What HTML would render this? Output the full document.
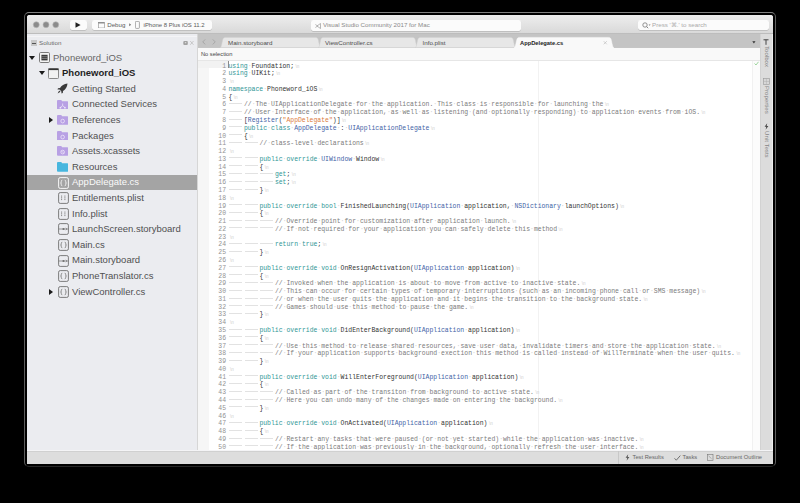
<!DOCTYPE html>
<html><head><meta charset="utf-8">
<style>
*{margin:0;padding:0;box-sizing:border-box}
html,body{width:800px;height:503px;overflow:hidden;background:#000;font-family:"Liberation Sans",sans-serif}
.abs{position:absolute}
#ring{position:absolute;left:24px;top:12px;width:752px;height:455px;border:1px solid #5e5e5e;border-top-color:#808080;border-bottom-color:#262626;border-radius:5px}
#win{position:absolute;left:27px;top:15px;width:746px;height:449px;background:#ececf0;border-radius:2.5px;overflow:hidden}
#toolbar{position:absolute;left:27px;top:15px;width:746px;height:19px;background:linear-gradient(#eeeeee,#d9d9d9);border-bottom:1px solid #bdbdbd;border-radius:2.5px 2.5px 0 0}
.tl{position:absolute;top:21.75px;width:6px;height:6px;border-radius:50%;background:#8d8d8d;box-shadow:0 0 0 0.6px #b5b5b5}
.btn{position:absolute;top:20px;height:10px;background:#fbfbfb;border-radius:2px;box-shadow:0 0.5px 0.5px rgba(0,0,0,0.25)}
.tbt{position:absolute;font-size:6.2px;color:#5a5a5a;white-space:nowrap;line-height:10px;top:20px}
#side{position:absolute;left:27px;top:34px;width:170px;height:416px;background:#ebecf0}
#sideborder{position:absolute;left:197px;top:34px;width:1px;height:416px;background:#d6d6d6}
.row{position:absolute;font-size:9.5px;line-height:14px;color:#505050;white-space:nowrap}
.row.r0{color:#666}
.row.r1{font-weight:bold;color:#1e1e1e}
.row.sel{color:#fafafa}
.selbg{position:absolute;left:27px;width:170px;height:15px;background:#a4a4a4}
#tabbar{position:absolute;left:198px;top:34px;width:562px;height:14px;background:#c4c4c4}
.tabt{position:absolute;top:37.5px;font-size:6.2px;color:#4e4e4e;line-height:10px;white-space:nowrap}
#crumb{position:absolute;left:198px;top:48px;width:562px;height:13px;background:#f9f9f9;border-bottom:1px solid #e6e6e6}
#editor{position:absolute;left:198px;top:61px;width:562px;height:389px;background:#fff;overflow:hidden}
#gutter{position:absolute;left:198px;top:61px;width:10.6px;height:389px;background:#f6f6f6}
#curl{position:absolute;left:198px;top:60.7px;width:30px;height:7.4px;background:#f2f2f2}
#rsb{position:absolute;left:759.5px;top:34px;width:13.5px;height:416px;background:#dcdcdc;border-left:0.7px solid #d2d2d2;border-right:0.7px solid #eeeeee}
#status{position:absolute;left:27px;top:450.5px;width:746px;height:13.5px;background:#dddddd;border-top:0.8px solid #d0d0d0;box-shadow:0 -1px 0 #f4f4f6}
.ln{position:absolute;left:0;width:800px;height:7.78px;font-family:"Liberation Mono",monospace;font-size:6.456px;line-height:7.78px;white-space:pre}
.num{position:absolute;right:574px;color:#939393;top:0}
.cd{position:absolute;left:228.4px;top:0}
.tx{position:absolute;top:0;color:#333}
.k{color:#2f9696}
.t{color:#3f63a6}
.s{color:#db7a3b}
.c{color:#7b7b7b}
.sp{font-weight:normal;color:#cfcfcf}
.nl{color:#d0d0d0;padding-left:1.5px;font-size:4.6px;font-family:"Liberation Sans",sans-serif;line-height:0}
.tb{position:absolute;top:1.6px;width:13px;height:0.55px;background:#e2e2e2}
#marg{position:absolute;left:752.3px;top:61px;width:7.5px;height:389px;background:#fcfcfc;border-left:0.6px solid #f1f1f1}
#rul{position:absolute;left:538px;top:61px;width:0.7px;height:389px;background:#f2f2f2}
.vt{position:absolute;font-size:6.1px;line-height:7px;color:#858585;white-space:nowrap;transform-origin:0 0;transform:rotate(90deg)}
.st{position:absolute;top:451px;font-size:5.75px;color:#666;line-height:13px;white-space:nowrap}
</style></head><body>
<div id="ring"></div>
<div id="win"></div>
<div id="toolbar"></div>
<svg style="position:absolute;left:30px;top:19px" width="32" height="12"><g fill="#8b8b8b" stroke="#b9b9b9" stroke-width="0.6"><circle cx="6.25" cy="5.75" r="3"/><circle cx="16" cy="5.75" r="3"/><circle cx="25.75" cy="5.75" r="3"/></g></svg>
<div class="btn" style="left:70px;width:17px"><svg style="position:absolute;left:5px;top:2.2px" width="6" height="6"><path d="M0.5 0.3L5.6 3L0.5 5.7Z" fill="#222"/></svg></div>
<div class="btn" style="left:92px;width:120px">
 <svg style="position:absolute;left:6px;top:1.8px" width="7" height="6.5"><rect x="0.4" y="0.4" width="6" height="5.6" fill="none" stroke="#8a8a8a" stroke-width="0.6"/><rect x="0.4" y="0.4" width="6" height="1" fill="#777"/></svg>
 <span class="tbt" style="left:15.2px;top:0">Debug</span>
 <svg style="position:absolute;left:37.3px;top:3.4px" width="3" height="4"><path d="M0.2 0.3L2.2 1.8L0.2 3.3Z" fill="#777"/></svg>
 <svg style="position:absolute;left:43px;top:1.2px" width="5" height="8"><rect x="0.4" y="0.4" width="4" height="7" rx="0.8" fill="none" stroke="#888" stroke-width="0.7"/></svg>
 <span class="tbt" style="left:51.6px;top:0;font-size:5.95px">iPhone 8 Plus iOS 11.2</span>
</div>
<div class="btn" style="left:311px;width:210px;height:11px">
 <svg style="position:absolute;left:4px;top:2.5px" width="6" height="6"><path d="M0.4 1.5L2.5 3L0.4 4.5M5.5 0.5V5.5L2 3Z" fill="none" stroke="#999" stroke-width="0.7"/></svg>
 <span class="tbt" style="left:11.9px;top:-0.8px;line-height:11px;color:#8a8a8a">Visual Studio Community 2017 for Mac</span>
</div>
<div class="btn" style="left:638px;width:131px">
 <svg style="position:absolute;left:4px;top:2px" width="9" height="7"><circle cx="3" cy="3" r="2.2" fill="none" stroke="#777" stroke-width="0.8"/><path d="M4.6 4.6L6.2 6.2" stroke="#777" stroke-width="0.9"/><path d="M6.6 2.6H8.6L7.6 3.8Z" fill="#777"/></svg>
 <span class="tbt" style="left:14px;top:0;color:#aaa">Press '⌘.' to search</span>
</div>

<div id="side"></div>
<div id="sideborder"></div><div style="position:absolute;left:27px;top:35.5px;width:170px;height:0.7px;background:#f4f4f6"></div>
<svg style="position:absolute;left:31px;top:40px" width="6" height="6"><rect x="0" y="0" width="6" height="6" fill="#c9c9c9"/><rect x="1" y="3" width="4" height="1" fill="#555"/></svg>
<div style="position:absolute;left:39px;top:38px;font-size:6.2px;color:#6a6a6a;line-height:10px">Solution</div>
<svg style="position:absolute;left:182px;top:40px" width="13" height="6"><rect x="1.3" y="1" width="4.5" height="4" rx="1" fill="#a2a2a2"/><path d="M2.6 2.2H4.5L3.55 3.4Z" fill="#eee"/><path d="M8.2 1L11.5 4.8M11.5 1L8.2 4.8" stroke="#b0b0b0" stroke-width="0.6"/></svg>
<svg style="position:absolute;left:29px;top:55.80px" width="6" height="4"><path d="M0 0H6L3 4Z" fill="#1a1a1a"/></svg><svg style="position:absolute;left:39px;top:52.10px" width="11" height="11" viewBox="0 0 11 11"><rect x="0.5" y="0.5" width="10" height="10" rx="1.2" fill="#f4f4f4" stroke="#7a7a7a"/><rect x="2.4" y="2.8" width="6.2" height="5.6" fill="#3a3a3a"/><rect x="2.4" y="4.6" width="6.2" height="0.5" fill="#bbb"/><rect x="2.4" y="6.4" width="6.2" height="0.5" fill="#bbb"/></svg><div class="row r0" style="left:53px;top:50.60px">Phoneword_iOS</div>
<svg style="position:absolute;left:39px;top:71.40px" width="6" height="4"><path d="M0 0H6L3 4Z" fill="#1a1a1a"/></svg><svg style="position:absolute;left:48px;top:67.70px" width="11" height="11" viewBox="0 0 11 11"><rect x="0.5" y="0.5" width="10" height="10" rx="0.8" fill="#f2f2f2" stroke="#8a8a8a"/><rect x="0.5" y="0.5" width="10" height="1.6" fill="#333"/></svg><div class="row r1" style="left:62px;top:66.20px">Phoneword_iOS</div>
<svg style="position:absolute;left:57px;top:83.30px" width="11" height="11" viewBox="0 0 11 11"><path d="M10.5 0.5 C7 0.8 4.5 2.5 3 5 L1 5.2 L0.5 6.5 L2.6 6.6 L4.4 8.4 L4.5 10.5 L5.8 10 L6 8 C8.5 6.5 10.2 4 10.5 0.5 Z" fill="#3a3a3a"/><path d="M2.2 7.5 L0.6 10.4 L3.5 8.8 Z" fill="#3a3a3a"/></svg><div class="row " style="left:72px;top:81.80px">Getting Started</div>
<svg style="position:absolute;left:56.9px;top:99.50px" width="11.3" height="9.8" viewBox="0 0 12 10" preserveAspectRatio="none"><path d="M0 1 Q0 0 1 0 L4.5 0 L5.5 1.3 L11 1.3 Q12 1.3 12 2.3 L12 9 Q12 10 11 10 L1 10 Q0 10 0 9 Z" fill="#b8a0e4"/><path d="M6 3.6V5.8M6 5.8L3.8 7.6M6 5.8L8.2 7.6" stroke="#efe9f8" stroke-width="0.8"/><circle cx="3.6" cy="7.8" r="0.9" fill="#efe9f8"/><circle cx="8.4" cy="7.8" r="0.9" fill="#efe9f8"/></svg><div class="row " style="left:72px;top:97.40px">Connected Services</div>
<svg style="position:absolute;left:49px;top:117.00px" width="4" height="6"><path d="M0 0V6L4 3Z" fill="#1a1a1a"/></svg><svg style="position:absolute;left:56.9px;top:115.10px" width="11.3" height="9.8" viewBox="0 0 12 10" preserveAspectRatio="none"><path d="M0 1 Q0 0 1 0 L4.5 0 L5.5 1.3 L11 1.3 Q12 1.3 12 2.3 L12 9 Q12 10 11 10 L1 10 Q0 10 0 9 Z" fill="#b8a0e4"/><circle cx="6" cy="6.2" r="1.9" fill="none" stroke="#efe9f8" stroke-width="0.8"/></svg><div class="row " style="left:72px;top:113.00px">References</div>
<svg style="position:absolute;left:56.9px;top:130.70px" width="11.3" height="9.8" viewBox="0 0 12 10" preserveAspectRatio="none"><path d="M0 1 Q0 0 1 0 L4.5 0 L5.5 1.3 L11 1.3 Q12 1.3 12 2.3 L12 9 Q12 10 11 10 L1 10 Q0 10 0 9 Z" fill="#b8a0e4"/><circle cx="6" cy="6.2" r="1.9" fill="none" stroke="#efe9f8" stroke-width="0.8"/></svg><div class="row " style="left:72px;top:128.60px">Packages</div>
<svg style="position:absolute;left:56.9px;top:146.30px" width="11.3" height="9.8" viewBox="0 0 12 10" preserveAspectRatio="none"><path d="M0 1 Q0 0 1 0 L4.5 0 L5.5 1.3 L11 1.3 Q12 1.3 12 2.3 L12 9 Q12 10 11 10 L1 10 Q0 10 0 9 Z" fill="#b8a0e4"/><circle cx="6" cy="6.2" r="1.9" fill="none" stroke="#efe9f8" stroke-width="0.8"/><path d="M4.6 4.8L7.4 7.6" stroke="#efe9f8" stroke-width="0.7"/></svg><div class="row " style="left:72px;top:144.20px">Assets.xcassets</div>
<svg style="position:absolute;left:56.9px;top:161.90px" width="11.3" height="9.8" viewBox="0 0 12 10" preserveAspectRatio="none"><path d="M0 1 Q0 0 1 0 L4.5 0 L5.5 1.3 L11 1.3 Q12 1.3 12 2.3 L12 9 Q12 10 11 10 L1 10 Q0 10 0 9 Z" fill="#47b6de"/></svg><div class="row " style="left:72px;top:159.80px">Resources</div>
<div class="selbg" style="top:174.90px"></div><svg style="position:absolute;left:57.5px;top:176.60px" width="11" height="12" viewBox="0 0 11 12"><rect x="0.6" y="0.6" width="9.8" height="10.8" rx="1.6" fill="none" stroke="#fff" stroke-width="0.9"/><path d="M4.3 3.2 Q3.3 3.2 3.3 4.2 V5.3 Q3.3 6 2.6 6 Q3.3 6 3.3 6.7 V7.8 Q3.3 8.8 4.3 8.8 M6.7 3.2 Q7.7 3.2 7.7 4.2 V5.3 Q7.7 6 8.4 6 Q7.7 6 7.7 6.7 V7.8 Q7.7 8.8 6.7 8.8" fill="none" stroke="#fff" stroke-width="0.75"/></svg><div class="row sel" style="left:72px;top:175.40px">AppDelegate.cs</div>
<svg style="position:absolute;left:57.5px;top:192.20px" width="11" height="12" viewBox="0 0 11 12"><rect x="0.6" y="0.6" width="9.8" height="10.8" rx="1.6" fill="none" stroke="#707070" stroke-width="0.9"/><path d="M3.6 3.5V8.5M6.9 3.5V8.5" stroke="#707070" stroke-width="0.8" stroke-dasharray="1.2 0.5"/></svg><div class="row " style="left:72px;top:191.00px">Entitlements.plist</div>
<svg style="position:absolute;left:57.5px;top:207.80px" width="11" height="12" viewBox="0 0 11 12"><rect x="0.6" y="0.6" width="9.8" height="10.8" rx="1.6" fill="none" stroke="#707070" stroke-width="0.9"/><path d="M3.6 3.5V8.5M6.9 3.5V8.5" stroke="#707070" stroke-width="0.8" stroke-dasharray="1.2 0.5"/></svg><div class="row " style="left:72px;top:206.60px">Info.plist</div>
<svg style="position:absolute;left:57.5px;top:223.40px" width="11" height="12" viewBox="0 0 11 12"><rect x="0.6" y="0.6" width="9.8" height="10.8" rx="1.6" fill="none" stroke="#707070" stroke-width="0.9"/><path d="M0.6 6 H10.4" stroke="#707070" stroke-width="0.7"/><circle cx="5.5" cy="6" r="1.1" fill="#707070"/><path d="M7.8 4.8L9 6L7.8 7.2" fill="none" stroke="#707070" stroke-width="0.6"/></svg><div class="row " style="left:72px;top:222.20px">LaunchScreen.storyboard</div>
<svg style="position:absolute;left:57.5px;top:239.00px" width="11" height="12" viewBox="0 0 11 12"><rect x="0.6" y="0.6" width="9.8" height="10.8" rx="1.6" fill="none" stroke="#707070" stroke-width="0.9"/><path d="M4.3 3.2 Q3.3 3.2 3.3 4.2 V5.3 Q3.3 6 2.6 6 Q3.3 6 3.3 6.7 V7.8 Q3.3 8.8 4.3 8.8 M6.7 3.2 Q7.7 3.2 7.7 4.2 V5.3 Q7.7 6 8.4 6 Q7.7 6 7.7 6.7 V7.8 Q7.7 8.8 6.7 8.8" fill="none" stroke="#707070" stroke-width="0.75"/></svg><div class="row " style="left:72px;top:237.80px">Main.cs</div>
<svg style="position:absolute;left:57.5px;top:254.60px" width="11" height="12" viewBox="0 0 11 12"><rect x="0.6" y="0.6" width="9.8" height="10.8" rx="1.6" fill="none" stroke="#707070" stroke-width="0.9"/><path d="M0.6 6 H10.4" stroke="#707070" stroke-width="0.7"/><circle cx="5.5" cy="6" r="1.1" fill="#707070"/><path d="M7.8 4.8L9 6L7.8 7.2" fill="none" stroke="#707070" stroke-width="0.6"/></svg><div class="row " style="left:72px;top:253.40px">Main.storyboard</div>
<svg style="position:absolute;left:57.5px;top:270.20px" width="11" height="12" viewBox="0 0 11 12"><rect x="0.6" y="0.6" width="9.8" height="10.8" rx="1.6" fill="none" stroke="#707070" stroke-width="0.9"/><path d="M4.3 3.2 Q3.3 3.2 3.3 4.2 V5.3 Q3.3 6 2.6 6 Q3.3 6 3.3 6.7 V7.8 Q3.3 8.8 4.3 8.8 M6.7 3.2 Q7.7 3.2 7.7 4.2 V5.3 Q7.7 6 8.4 6 Q7.7 6 7.7 6.7 V7.8 Q7.7 8.8 6.7 8.8" fill="none" stroke="#707070" stroke-width="0.75"/></svg><div class="row " style="left:72px;top:269.00px">PhoneTranslator.cs</div>
<svg style="position:absolute;left:49px;top:288.60px" width="4" height="6"><path d="M0 0V6L4 3Z" fill="#1a1a1a"/></svg><svg style="position:absolute;left:57.5px;top:285.80px" width="11" height="12" viewBox="0 0 11 12"><rect x="0.6" y="0.6" width="9.8" height="10.8" rx="1.6" fill="none" stroke="#707070" stroke-width="0.9"/><path d="M4.3 3.2 Q3.3 3.2 3.3 4.2 V5.3 Q3.3 6 2.6 6 Q3.3 6 3.3 6.7 V7.8 Q3.3 8.8 4.3 8.8 M6.7 3.2 Q7.7 3.2 7.7 4.2 V5.3 Q7.7 6 8.4 6 Q7.7 6 7.7 6.7 V7.8 Q7.7 8.8 6.7 8.8" fill="none" stroke="#707070" stroke-width="0.75"/></svg><div class="row " style="left:72px;top:284.60px">ViewController.cs</div>

<div id="tabbar"></div>
<svg style="position:absolute;left:201.5px;top:39.3px" width="4" height="6"><path d="M3.2 0.4L0.8 2.9L3.2 5.4" fill="none" stroke="#999" stroke-width="0.7"/></svg>
<svg style="position:absolute;left:211.5px;top:39.3px" width="4" height="6"><path d="M0.8 0.4L3.2 2.9L0.8 5.4" fill="none" stroke="#999" stroke-width="0.7"/></svg>
<svg style="position:absolute;left:0;top:0" width="800" height="60" viewBox="0 0 800 60"><path d="M220,48 C221.6,48 222.4,40 223.2,38.6 Q223.9,37.4 225.6,37.4 L315.4,37.4 Q317.1,37.4 317.8,38.6 C318.6,40 319.4,48 321,48 Z" fill="#e7e7e7" stroke="#d2d2d2" stroke-width="0.5"/><path d="M318,48 C319.6,48 320.4,40 321.2,38.6 Q321.9,37.4 323.6,37.4 L412.4,37.4 Q414.1,37.4 414.8,38.6 C415.6,40 416.4,48 418,48 Z" fill="#e7e7e7" stroke="#d2d2d2" stroke-width="0.5"/><path d="M415,48 C416.6,48 417.4,40 418.2,38.6 Q418.9,37.4 420.6,37.4 L510.4,37.4 Q512.1,37.4 512.8,38.6 C513.6,40 514.4,48 516,48 Z" fill="#e7e7e7" stroke="#d2d2d2" stroke-width="0.5"/><rect x="198" y="47.6" width="562" height="0.6" fill="#c9c9c9"/><path d="M514,48 C515.6,48 516.4,40 517.2,38.6 Q517.9,37.4 519.6,37.4 L608.4,37.4 Q610.1,37.4 610.8,38.6 C611.6,40 612.4,48 614,48 Z" fill="#f9f9f9" stroke="#f9f9f9" stroke-width="0.5"/><path d="M603.7,41.2 L606.8,44.3 M606.8,41.2 L603.7,44.3" stroke="#b5b5b5" stroke-width="0.6"/></svg>
<div class="tabt" style="left:228px">Main.storyboard</div>
<div class="tabt" style="left:325px">ViewController.cs</div>
<div class="tabt" style="left:422.5px">Info.plist</div>
<div class="tabt" style="left:520px;color:#222;font-weight:bold;font-size:5.75px">AppDelegate.cs</div>
<svg style="position:absolute;left:752.2px;top:41px" width="4" height="3"><path d="M0.3 0.2H3.5L1.9 2.6Z" fill="#333"/></svg>
<div id="crumb"></div>
<div style="position:absolute;left:201px;top:49px;font-size:5.7px;color:#444;line-height:10px">No selection</div>
<div id="editor"></div>
<div id="gutter"></div>
<div id="curl"></div>
<div id="marg"></div><div id="rul"></div>
<div style="position:absolute;left:228.3px;top:60.6px;width:0.7px;height:7px;background:#8a8a8a"></div>
<svg style="position:absolute;left:754px;top:61px" width="5" height="5"><path d="M0.5 2.5L2 4L4.5 0.8" fill="none" stroke="#8c8" stroke-width="0.8"/></svg>
<div class="ln" style="top:62.51px"><span class="num">1</span><div class="cd"><span class="tx" style="left:0.00px"><span class="k">using</span><b class="sp">·</b>Foundation;<span class="nl">\n</span></span></div></div>
<div class="ln" style="top:70.29px"><span class="num">2</span><div class="cd"><span class="tx" style="left:0.00px"><span class="k">using</span><b class="sp">·</b>UIKit;<span class="nl">\n</span></span></div></div>
<div class="ln" style="top:78.07px"><span class="num">3</span><div class="cd"><span class="tx" style="left:0.00px"><span class="nl">\n</span></span></div></div>
<div class="ln" style="top:85.85px"><span class="num">4</span><div class="cd"><span class="tx" style="left:0.00px"><span class="k">namespace</span><b class="sp">·</b>Phoneword_iOS<span class="nl">\n</span></span></div></div>
<div class="ln" style="top:93.63px"><span class="num">5</span><div class="cd"><span class="tx" style="left:0.00px">{<span class="nl">\n</span></span></div></div>
<div class="ln" style="top:101.41px"><span class="num">6</span><div class="cd"><i class="tb" style="left:0.80px"></i><span class="tx" style="left:15.50px"><span class="c">//</span><b class="sp">·</b><span class="c">The</span><b class="sp">·</b><span class="c">UIApplicationDelegate</span><b class="sp">·</b><span class="c">for</span><b class="sp">·</b><span class="c">the</span><b class="sp">·</b><span class="c">application.</span><b class="sp">·</b><span class="c">This</span><b class="sp">·</b><span class="c">class</span><b class="sp">·</b><span class="c">is</span><b class="sp">·</b><span class="c">responsible</span><b class="sp">·</b><span class="c">for</span><b class="sp">·</b><span class="c">launching</span><b class="sp">·</b><span class="c">the</span><span class="nl">\n</span></span></div></div>
<div class="ln" style="top:109.19px"><span class="num">7</span><div class="cd"><i class="tb" style="left:0.80px"></i><span class="tx" style="left:15.50px"><span class="c">//</span><b class="sp">·</b><span class="c">User</span><b class="sp">·</b><span class="c">Interface</span><b class="sp">·</b><span class="c">of</span><b class="sp">·</b><span class="c">the</span><b class="sp">·</b><span class="c">application,</span><b class="sp">·</b><span class="c">as</span><b class="sp">·</b><span class="c">well</span><b class="sp">·</b><span class="c">as</span><b class="sp">·</b><span class="c">listening</span><b class="sp">·</b><span class="c">(and</span><b class="sp">·</b><span class="c">optionally</span><b class="sp">·</b><span class="c">responding)</span><b class="sp">·</b><span class="c">to</span><b class="sp">·</b><span class="c">application</span><b class="sp">·</b><span class="c">events</span><b class="sp">·</b><span class="c">from</span><b class="sp">·</b><span class="c">iOS.</span><span class="nl">\n</span></span></div></div>
<div class="ln" style="top:116.97px"><span class="num">8</span><div class="cd"><i class="tb" style="left:0.80px"></i><span class="tx" style="left:15.50px">[<span class="t">Register</span>(<span class="s">"AppDelegate"</span>)]<span class="nl">\n</span></span></div></div>
<div class="ln" style="top:124.75px"><span class="num">9</span><div class="cd"><i class="tb" style="left:0.80px"></i><span class="tx" style="left:15.50px"><span class="k">public</span><b class="sp">·</b><span class="k">class</span><b class="sp">·</b><span class="t">AppDelegate</span><b class="sp">·</b>:<b class="sp">·</b><span class="t">UIApplicationDelegate</span><span class="nl">\n</span></span></div></div>
<div class="ln" style="top:132.53px"><span class="num">10</span><div class="cd"><i class="tb" style="left:0.80px"></i><span class="tx" style="left:15.50px">{<span class="nl">\n</span></span></div></div>
<div class="ln" style="top:140.31px"><span class="num">11</span><div class="cd"><i class="tb" style="left:0.80px"></i><i class="tb" style="left:16.30px"></i><span class="tx" style="left:31.00px"><span class="c">//</span><b class="sp">·</b><span class="c">class-level</span><b class="sp">·</b><span class="c">declarations</span><span class="nl">\n</span></span></div></div>
<div class="ln" style="top:148.09px"><span class="num">12</span><div class="cd"><span class="tx" style="left:0.00px"><span class="nl">\n</span></span></div></div>
<div class="ln" style="top:155.87px"><span class="num">13</span><div class="cd"><i class="tb" style="left:0.80px"></i><i class="tb" style="left:16.30px"></i><span class="tx" style="left:31.00px"><span class="k">public</span><b class="sp">·</b><span class="k">override</span><b class="sp">·</b><span class="t">UIWindow</span><b class="sp">·</b>Window<span class="nl">\n</span></span></div></div>
<div class="ln" style="top:163.65px"><span class="num">14</span><div class="cd"><i class="tb" style="left:0.80px"></i><i class="tb" style="left:16.30px"></i><span class="tx" style="left:31.00px">{<span class="nl">\n</span></span></div></div>
<div class="ln" style="top:171.43px"><span class="num">15</span><div class="cd"><i class="tb" style="left:0.80px"></i><i class="tb" style="left:16.30px"></i><i class="tb" style="left:31.80px"></i><span class="tx" style="left:46.50px"><span class="k">get</span>;<span class="nl">\n</span></span></div></div>
<div class="ln" style="top:179.21px"><span class="num">16</span><div class="cd"><i class="tb" style="left:0.80px"></i><i class="tb" style="left:16.30px"></i><i class="tb" style="left:31.80px"></i><span class="tx" style="left:46.50px"><span class="k">set</span>;<span class="nl">\n</span></span></div></div>
<div class="ln" style="top:186.99px"><span class="num">17</span><div class="cd"><i class="tb" style="left:0.80px"></i><i class="tb" style="left:16.30px"></i><span class="tx" style="left:31.00px">}<span class="nl">\n</span></span></div></div>
<div class="ln" style="top:194.77px"><span class="num">18</span><div class="cd"><span class="tx" style="left:0.00px"><span class="nl">\n</span></span></div></div>
<div class="ln" style="top:202.55px"><span class="num">19</span><div class="cd"><i class="tb" style="left:0.80px"></i><i class="tb" style="left:16.30px"></i><span class="tx" style="left:31.00px"><span class="k">public</span><b class="sp">·</b><span class="k">override</span><b class="sp">·</b><span class="k">bool</span><b class="sp">·</b>FinishedLaunching(<span class="t">UIApplication</span><b class="sp">·</b>application,<b class="sp">·</b><span class="t">NSDictionary</span><b class="sp">·</b>launchOptions)<span class="nl">\n</span></span></div></div>
<div class="ln" style="top:210.33px"><span class="num">20</span><div class="cd"><i class="tb" style="left:0.80px"></i><i class="tb" style="left:16.30px"></i><span class="tx" style="left:31.00px">{<span class="nl">\n</span></span></div></div>
<div class="ln" style="top:218.11px"><span class="num">21</span><div class="cd"><i class="tb" style="left:0.80px"></i><i class="tb" style="left:16.30px"></i><i class="tb" style="left:31.80px"></i><span class="tx" style="left:46.50px"><span class="c">//</span><b class="sp">·</b><span class="c">Override</span><b class="sp">·</b><span class="c">point</span><b class="sp">·</b><span class="c">for</span><b class="sp">·</b><span class="c">customization</span><b class="sp">·</b><span class="c">after</span><b class="sp">·</b><span class="c">application</span><b class="sp">·</b><span class="c">launch.</span><span class="nl">\n</span></span></div></div>
<div class="ln" style="top:225.89px"><span class="num">22</span><div class="cd"><i class="tb" style="left:0.80px"></i><i class="tb" style="left:16.30px"></i><i class="tb" style="left:31.80px"></i><span class="tx" style="left:46.50px"><span class="c">//</span><b class="sp">·</b><span class="c">If</span><b class="sp">·</b><span class="c">not</span><b class="sp">·</b><span class="c">required</span><b class="sp">·</b><span class="c">for</span><b class="sp">·</b><span class="c">your</span><b class="sp">·</b><span class="c">application</span><b class="sp">·</b><span class="c">you</span><b class="sp">·</b><span class="c">can</span><b class="sp">·</b><span class="c">safely</span><b class="sp">·</b><span class="c">delete</span><b class="sp">·</b><span class="c">this</span><b class="sp">·</b><span class="c">method</span><span class="nl">\n</span></span></div></div>
<div class="ln" style="top:233.67px"><span class="num">23</span><div class="cd"><span class="tx" style="left:0.00px"><span class="nl">\n</span></span></div></div>
<div class="ln" style="top:241.45px"><span class="num">24</span><div class="cd"><i class="tb" style="left:0.80px"></i><i class="tb" style="left:16.30px"></i><i class="tb" style="left:31.80px"></i><span class="tx" style="left:46.50px"><span class="k">return</span><b class="sp">·</b><span class="k">true</span>;<span class="nl">\n</span></span></div></div>
<div class="ln" style="top:249.23px"><span class="num">25</span><div class="cd"><i class="tb" style="left:0.80px"></i><i class="tb" style="left:16.30px"></i><span class="tx" style="left:31.00px">}<span class="nl">\n</span></span></div></div>
<div class="ln" style="top:257.01px"><span class="num">26</span><div class="cd"><span class="tx" style="left:0.00px"><span class="nl">\n</span></span></div></div>
<div class="ln" style="top:264.79px"><span class="num">27</span><div class="cd"><i class="tb" style="left:0.80px"></i><i class="tb" style="left:16.30px"></i><span class="tx" style="left:31.00px"><span class="k">public</span><b class="sp">·</b><span class="k">override</span><b class="sp">·</b><span class="k">void</span><b class="sp">·</b>OnResignActivation(<span class="t">UIApplication</span><b class="sp">·</b>application)<span class="nl">\n</span></span></div></div>
<div class="ln" style="top:272.57px"><span class="num">28</span><div class="cd"><i class="tb" style="left:0.80px"></i><i class="tb" style="left:16.30px"></i><span class="tx" style="left:31.00px">{<span class="nl">\n</span></span></div></div>
<div class="ln" style="top:280.35px"><span class="num">29</span><div class="cd"><i class="tb" style="left:0.80px"></i><i class="tb" style="left:16.30px"></i><i class="tb" style="left:31.80px"></i><span class="tx" style="left:46.50px"><span class="c">//</span><b class="sp">·</b><span class="c">Invoked</span><b class="sp">·</b><span class="c">when</span><b class="sp">·</b><span class="c">the</span><b class="sp">·</b><span class="c">application</span><b class="sp">·</b><span class="c">is</span><b class="sp">·</b><span class="c">about</span><b class="sp">·</b><span class="c">to</span><b class="sp">·</b><span class="c">move</span><b class="sp">·</b><span class="c">from</span><b class="sp">·</b><span class="c">active</span><b class="sp">·</b><span class="c">to</span><b class="sp">·</b><span class="c">inactive</span><b class="sp">·</b><span class="c">state.</span><span class="nl">\n</span></span></div></div>
<div class="ln" style="top:288.13px"><span class="num">30</span><div class="cd"><i class="tb" style="left:0.80px"></i><i class="tb" style="left:16.30px"></i><i class="tb" style="left:31.80px"></i><span class="tx" style="left:46.50px"><span class="c">//</span><b class="sp">·</b><span class="c">This</span><b class="sp">·</b><span class="c">can</span><b class="sp">·</b><span class="c">occur</span><b class="sp">·</b><span class="c">for</span><b class="sp">·</b><span class="c">certain</span><b class="sp">·</b><span class="c">types</span><b class="sp">·</b><span class="c">of</span><b class="sp">·</b><span class="c">temporary</span><b class="sp">·</b><span class="c">interruptions</span><b class="sp">·</b><span class="c">(such</span><b class="sp">·</b><span class="c">as</span><b class="sp">·</b><span class="c">an</span><b class="sp">·</b><span class="c">incoming</span><b class="sp">·</b><span class="c">phone</span><b class="sp">·</b><span class="c">call</span><b class="sp">·</b><span class="c">or</span><b class="sp">·</b><span class="c">SMS</span><b class="sp">·</b><span class="c">message)</span><span class="nl">\n</span></span></div></div>
<div class="ln" style="top:295.91px"><span class="num">31</span><div class="cd"><i class="tb" style="left:0.80px"></i><i class="tb" style="left:16.30px"></i><i class="tb" style="left:31.80px"></i><span class="tx" style="left:46.50px"><span class="c">//</span><b class="sp">·</b><span class="c">or</span><b class="sp">·</b><span class="c">when</span><b class="sp">·</b><span class="c">the</span><b class="sp">·</b><span class="c">user</span><b class="sp">·</b><span class="c">quits</span><b class="sp">·</b><span class="c">the</span><b class="sp">·</b><span class="c">application</span><b class="sp">·</b><span class="c">and</span><b class="sp">·</b><span class="c">it</span><b class="sp">·</b><span class="c">begins</span><b class="sp">·</b><span class="c">the</span><b class="sp">·</b><span class="c">transition</span><b class="sp">·</b><span class="c">to</span><b class="sp">·</b><span class="c">the</span><b class="sp">·</b><span class="c">background</span><b class="sp">·</b><span class="c">state.</span><span class="nl">\n</span></span></div></div>
<div class="ln" style="top:303.69px"><span class="num">32</span><div class="cd"><i class="tb" style="left:0.80px"></i><i class="tb" style="left:16.30px"></i><i class="tb" style="left:31.80px"></i><span class="tx" style="left:46.50px"><span class="c">//</span><b class="sp">·</b><span class="c">Games</span><b class="sp">·</b><span class="c">should</span><b class="sp">·</b><span class="c">use</span><b class="sp">·</b><span class="c">this</span><b class="sp">·</b><span class="c">method</span><b class="sp">·</b><span class="c">to</span><b class="sp">·</b><span class="c">pause</span><b class="sp">·</b><span class="c">the</span><b class="sp">·</b><span class="c">game.</span><span class="nl">\n</span></span></div></div>
<div class="ln" style="top:311.47px"><span class="num">33</span><div class="cd"><i class="tb" style="left:0.80px"></i><i class="tb" style="left:16.30px"></i><span class="tx" style="left:31.00px">}<span class="nl">\n</span></span></div></div>
<div class="ln" style="top:319.25px"><span class="num">34</span><div class="cd"><span class="tx" style="left:0.00px"><span class="nl">\n</span></span></div></div>
<div class="ln" style="top:327.03px"><span class="num">35</span><div class="cd"><i class="tb" style="left:0.80px"></i><i class="tb" style="left:16.30px"></i><span class="tx" style="left:31.00px"><span class="k">public</span><b class="sp">·</b><span class="k">override</span><b class="sp">·</b><span class="k">void</span><b class="sp">·</b>DidEnterBackground(<span class="t">UIApplication</span><b class="sp">·</b>application)<span class="nl">\n</span></span></div></div>
<div class="ln" style="top:334.81px"><span class="num">36</span><div class="cd"><i class="tb" style="left:0.80px"></i><i class="tb" style="left:16.30px"></i><span class="tx" style="left:31.00px">{<span class="nl">\n</span></span></div></div>
<div class="ln" style="top:342.59px"><span class="num">37</span><div class="cd"><i class="tb" style="left:0.80px"></i><i class="tb" style="left:16.30px"></i><i class="tb" style="left:31.80px"></i><span class="tx" style="left:46.50px"><span class="c">//</span><b class="sp">·</b><span class="c">Use</span><b class="sp">·</b><span class="c">this</span><b class="sp">·</b><span class="c">method</span><b class="sp">·</b><span class="c">to</span><b class="sp">·</b><span class="c">release</span><b class="sp">·</b><span class="c">shared</span><b class="sp">·</b><span class="c">resources,</span><b class="sp">·</b><span class="c">save</span><b class="sp">·</b><span class="c">user</span><b class="sp">·</b><span class="c">data,</span><b class="sp">·</b><span class="c">invalidate</span><b class="sp">·</b><span class="c">timers</span><b class="sp">·</b><span class="c">and</span><b class="sp">·</b><span class="c">store</span><b class="sp">·</b><span class="c">the</span><b class="sp">·</b><span class="c">application</span><b class="sp">·</b><span class="c">state.</span><span class="nl">\n</span></span></div></div>
<div class="ln" style="top:350.37px"><span class="num">38</span><div class="cd"><i class="tb" style="left:0.80px"></i><i class="tb" style="left:16.30px"></i><i class="tb" style="left:31.80px"></i><span class="tx" style="left:46.50px"><span class="c">//</span><b class="sp">·</b><span class="c">If</span><b class="sp">·</b><span class="c">your</span><b class="sp">·</b><span class="c">application</span><b class="sp">·</b><span class="c">supports</span><b class="sp">·</b><span class="c">background</span><b class="sp">·</b><span class="c">exection</span><b class="sp">·</b><span class="c">this</span><b class="sp">·</b><span class="c">method</span><b class="sp">·</b><span class="c">is</span><b class="sp">·</b><span class="c">called</span><b class="sp">·</b><span class="c">instead</span><b class="sp">·</b><span class="c">of</span><b class="sp">·</b><span class="c">WillTerminate</span><b class="sp">·</b><span class="c">when</span><b class="sp">·</b><span class="c">the</span><b class="sp">·</b><span class="c">user</span><b class="sp">·</b><span class="c">quits.</span><span class="nl">\n</span></span></div></div>
<div class="ln" style="top:358.15px"><span class="num">39</span><div class="cd"><i class="tb" style="left:0.80px"></i><i class="tb" style="left:16.30px"></i><span class="tx" style="left:31.00px">}<span class="nl">\n</span></span></div></div>
<div class="ln" style="top:365.93px"><span class="num">40</span><div class="cd"><span class="tx" style="left:0.00px"><span class="nl">\n</span></span></div></div>
<div class="ln" style="top:373.71px"><span class="num">41</span><div class="cd"><i class="tb" style="left:0.80px"></i><i class="tb" style="left:16.30px"></i><span class="tx" style="left:31.00px"><span class="k">public</span><b class="sp">·</b><span class="k">override</span><b class="sp">·</b><span class="k">void</span><b class="sp">·</b>WillEnterForeground(<span class="t">UIApplication</span><b class="sp">·</b>application)<span class="nl">\n</span></span></div></div>
<div class="ln" style="top:381.49px"><span class="num">42</span><div class="cd"><i class="tb" style="left:0.80px"></i><i class="tb" style="left:16.30px"></i><span class="tx" style="left:31.00px">{<span class="nl">\n</span></span></div></div>
<div class="ln" style="top:389.27px"><span class="num">43</span><div class="cd"><i class="tb" style="left:0.80px"></i><i class="tb" style="left:16.30px"></i><i class="tb" style="left:31.80px"></i><span class="tx" style="left:46.50px"><span class="c">//</span><b class="sp">·</b><span class="c">Called</span><b class="sp">·</b><span class="c">as</span><b class="sp">·</b><span class="c">part</span><b class="sp">·</b><span class="c">of</span><b class="sp">·</b><span class="c">the</span><b class="sp">·</b><span class="c">transiton</span><b class="sp">·</b><span class="c">from</span><b class="sp">·</b><span class="c">background</span><b class="sp">·</b><span class="c">to</span><b class="sp">·</b><span class="c">active</span><b class="sp">·</b><span class="c">state.</span><span class="nl">\n</span></span></div></div>
<div class="ln" style="top:397.05px"><span class="num">44</span><div class="cd"><i class="tb" style="left:0.80px"></i><i class="tb" style="left:16.30px"></i><i class="tb" style="left:31.80px"></i><span class="tx" style="left:46.50px"><span class="c">//</span><b class="sp">·</b><span class="c">Here</span><b class="sp">·</b><span class="c">you</span><b class="sp">·</b><span class="c">can</span><b class="sp">·</b><span class="c">undo</span><b class="sp">·</b><span class="c">many</span><b class="sp">·</b><span class="c">of</span><b class="sp">·</b><span class="c">the</span><b class="sp">·</b><span class="c">changes</span><b class="sp">·</b><span class="c">made</span><b class="sp">·</b><span class="c">on</span><b class="sp">·</b><span class="c">entering</span><b class="sp">·</b><span class="c">the</span><b class="sp">·</b><span class="c">background.</span><span class="nl">\n</span></span></div></div>
<div class="ln" style="top:404.83px"><span class="num">45</span><div class="cd"><i class="tb" style="left:0.80px"></i><i class="tb" style="left:16.30px"></i><span class="tx" style="left:31.00px">}<span class="nl">\n</span></span></div></div>
<div class="ln" style="top:412.61px"><span class="num">46</span><div class="cd"><span class="tx" style="left:0.00px"><span class="nl">\n</span></span></div></div>
<div class="ln" style="top:420.39px"><span class="num">47</span><div class="cd"><i class="tb" style="left:0.80px"></i><i class="tb" style="left:16.30px"></i><span class="tx" style="left:31.00px"><span class="k">public</span><b class="sp">·</b><span class="k">override</span><b class="sp">·</b><span class="k">void</span><b class="sp">·</b>OnActivated(<span class="t">UIApplication</span><b class="sp">·</b>application)<span class="nl">\n</span></span></div></div>
<div class="ln" style="top:428.17px"><span class="num">48</span><div class="cd"><i class="tb" style="left:0.80px"></i><i class="tb" style="left:16.30px"></i><span class="tx" style="left:31.00px">{<span class="nl">\n</span></span></div></div>
<div class="ln" style="top:435.95px"><span class="num">49</span><div class="cd"><i class="tb" style="left:0.80px"></i><i class="tb" style="left:16.30px"></i><i class="tb" style="left:31.80px"></i><span class="tx" style="left:46.50px"><span class="c">//</span><b class="sp">·</b><span class="c">Restart</span><b class="sp">·</b><span class="c">any</span><b class="sp">·</b><span class="c">tasks</span><b class="sp">·</b><span class="c">that</span><b class="sp">·</b><span class="c">were</span><b class="sp">·</b><span class="c">paused</span><b class="sp">·</b><span class="c">(or</span><b class="sp">·</b><span class="c">not</span><b class="sp">·</b><span class="c">yet</span><b class="sp">·</b><span class="c">started)</span><b class="sp">·</b><span class="c">while</span><b class="sp">·</b><span class="c">the</span><b class="sp">·</b><span class="c">application</span><b class="sp">·</b><span class="c">was</span><b class="sp">·</b><span class="c">inactive.</span><span class="nl">\n</span></span></div></div>
<div class="ln" style="top:443.73px"><span class="num">50</span><div class="cd"><i class="tb" style="left:0.80px"></i><i class="tb" style="left:16.30px"></i><i class="tb" style="left:31.80px"></i><span class="tx" style="left:46.50px"><span class="c">//</span><b class="sp">·</b><span class="c">If</span><b class="sp">·</b><span class="c">the</span><b class="sp">·</b><span class="c">application</span><b class="sp">·</b><span class="c">was</span><b class="sp">·</b><span class="c">previously</span><b class="sp">·</b><span class="c">in</span><b class="sp">·</b><span class="c">the</span><b class="sp">·</b><span class="c">background,</span><b class="sp">·</b><span class="c">optionally</span><b class="sp">·</b><span class="c">refresh</span><b class="sp">·</b><span class="c">the</span><b class="sp">·</b><span class="c">user</span><b class="sp">·</b><span class="c">interface.</span><span class="nl">\n</span></span></div></div>
<div id="rsb"></div>
<div class="vt" style="left:770.5px;top:46px">Toolbox</div>
<svg style="position:absolute;left:763px;top:38.5px" width="6" height="6"><path d="M0.5 0.8H5.5M3 0.8V5.8" stroke="#444" stroke-width="1"/></svg>
<svg style="position:absolute;left:762.5px;top:78px" width="7" height="7"><rect x="0.4" y="0.4" width="6" height="6" fill="#d8d8d8" stroke="#999" stroke-width="0.6"/><path d="M0.5 3.4H6.5M3.4 0.5V6.5" stroke="#aaa" stroke-width="0.5"/></svg>
<svg style="position:absolute;left:763.5px;top:123px" width="5" height="7"><path d="M3.2 0.3L0.6 3.8H2.3L1.6 6.7L4.4 2.9H2.7Z" fill="#444"/></svg>
<div class="vt" style="left:770.5px;top:86px">Properties</div>
<div class="vt" style="left:770.5px;top:131px">Unit Tests</div>
<div id="status"></div>
<div style="position:absolute;left:618px;top:451px;width:1px;height:13px;background:#c8c8c8"></div>
<div class="st" style="left:632.5px">Test Results</div>
<div class="st" style="left:682.5px">Tasks</div>
<div class="st" style="left:716px">Document Outline</div>
<svg style="position:absolute;left:625px;top:454px" width="5" height="7"><path d="M3.2 0.3L0.6 3.8H2.3L1.6 6.7L4.4 2.9H2.7Z" fill="#555"/></svg>
<svg style="position:absolute;left:674px;top:454.5px" width="7" height="6"><path d="M0.5 3.3L2.3 5.2L6.3 0.6" fill="none" stroke="#555" stroke-width="0.8"/></svg>
<svg style="position:absolute;left:706.5px;top:454px" width="7" height="7"><rect x="0.4" y="0.4" width="5.6" height="6" fill="none" stroke="#777" stroke-width="0.6"/><path d="M1.5 1.8L4.6 4.8" stroke="#777" stroke-width="0.5"/></svg>
</body></html>
